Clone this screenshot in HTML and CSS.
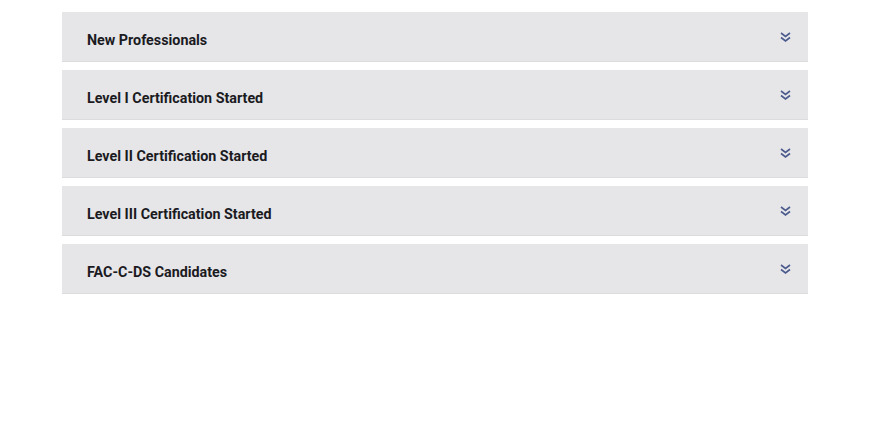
FILE: index.html
```html
<!DOCTYPE html>
<html lang="en">
<head>
<meta charset="utf-8">
<title>Accordion</title>
<link rel="stylesheet" href="styles.css">
</head>
<body>
<div class="accordion">
  <div class="item"><span class="title">New Professionals</span><svg class="chev" viewBox="0 0 11 10" width="11" height="10"><path d="M1 1 L5.5 4.5 L10 1 M1 5.5 L5.5 9 L10 5.5" fill="none" stroke="#4b5a8c" stroke-width="1.6"/></svg></div>
  <div class="item"><span class="title">Level I Certification Started</span><svg class="chev" viewBox="0 0 11 10" width="11" height="10"><path d="M1 1 L5.5 4.5 L10 1 M1 5.5 L5.5 9 L10 5.5" fill="none" stroke="#4b5a8c" stroke-width="1.6"/></svg></div>
  <div class="item"><span class="title">Level II Certification Started</span><svg class="chev" viewBox="0 0 11 10" width="11" height="10"><path d="M1 1 L5.5 4.5 L10 1 M1 5.5 L5.5 9 L10 5.5" fill="none" stroke="#4b5a8c" stroke-width="1.6"/></svg></div>
  <div class="item"><span class="title">Level III Certification Started</span><svg class="chev" viewBox="0 0 11 10" width="11" height="10"><path d="M1 1 L5.5 4.5 L10 1 M1 5.5 L5.5 9 L10 5.5" fill="none" stroke="#4b5a8c" stroke-width="1.6"/></svg></div>
  <div class="item"><span class="title">FAC-C-DS Candidates</span><svg class="chev" viewBox="0 0 11 10" width="11" height="10"><path d="M1 1 L5.5 4.5 L10 1 M1 5.5 L5.5 9 L10 5.5" fill="none" stroke="#4b5a8c" stroke-width="1.6"/></svg></div>
</div>
</body>
</html>
```
FILE: styles.css
```css
html, body {
  margin: 0;
  padding: 0;
  background: #ffffff;
}
.accordion {
  display: flex;
  flex-direction: column;
  gap: 8px;
  width: 746px;
  margin: 12px 0 0 62px;
}
.item {
  height: 50px;
  box-sizing: border-box;
  background: #e6e6e9;
  border-bottom: 1px solid #dcdcdf;
  display: flex;
  align-items: center;
  justify-content: space-between;
  padding: 7px 17px 0 25px;
}
.title {
  font-family: "Roboto", "Liberation Sans", sans-serif;
  font-weight: 700;
  font-size: 14.3px;
  color: #1b1b1f;
}
.chev {
  display: block;
  margin-top: -6px;
}
```
